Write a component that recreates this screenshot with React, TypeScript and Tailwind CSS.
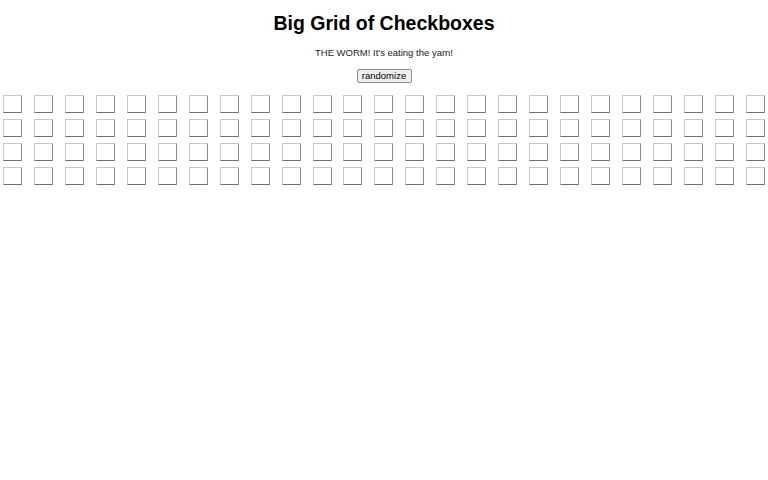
import { useState } from 'react';

const ROWS = 4;
const COLS = 25;

function Box({ checked, onToggle }: { checked: boolean; onToggle: () => void }) {
  return (
    <button
      type="button"
      onClick={onToggle}
      className="w-[19px] h-[18px] bg-white border border-t-[#c8c8c8] border-l-[#c8c8c8] border-r-[#8a8a8a] border-b-[#6f6f6f] rounded-[1px] flex items-center justify-center p-0"
    >
      {checked && (
        <svg width="12" height="12" viewBox="0 0 12 12">
          <path d="M2 6.5 L5 9.5 L10 2.5" stroke="#222" strokeWidth="2" fill="none" />
        </svg>
      )}
    </button>
  );
}

export default function App() {
  const [boxes, setBoxes] = useState<boolean[]>(() => Array(ROWS * COLS).fill(false));

  const toggle = (i: number) =>
    setBoxes((b) => b.map((v, j) => (j === i ? !v : v)));

  // random fill
  const randomize = () => setBoxes((b) => b.map(() => Math.random() > 0.5));

  return (
    <div className="w-[768px] h-[480px] bg-white font-['Liberation_Sans',Arial,sans-serif] text-black">
      <h1 className="text-[19.5px] font-bold text-center pt-[11px] leading-[24px]">Big Grid of Checkboxes</h1>
      <p className="text-[9.5px] text-center mt-[12px] leading-[12px] text-[#222]">
        THE WORM! It's eating the yarn!
      </p>
      <div className="flex justify-center mt-[10px]">
        <button
          type="button"
          onClick={randomize}
          className="h-[14px] w-[55px] text-[9.5px] leading-[12px] bg-[#efefef] border border-[#8f8f8f] rounded-[2px] text-black"
        >
          randomize
        </button>
      </div>
      <div className="flex flex-col gap-[6px] mt-[12px] px-[3px]">
        {Array.from({ length: ROWS }).map((_, r) => (
          <div key={r} className="flex justify-between">
            {Array.from({ length: COLS }).map((_, c) => {
              const i = r * COLS + c;
              return <Box key={c} checked={boxes[i]} onToggle={() => toggle(i)} />;
            })}
          </div>
        ))}
      </div>
    </div>
  );
}
